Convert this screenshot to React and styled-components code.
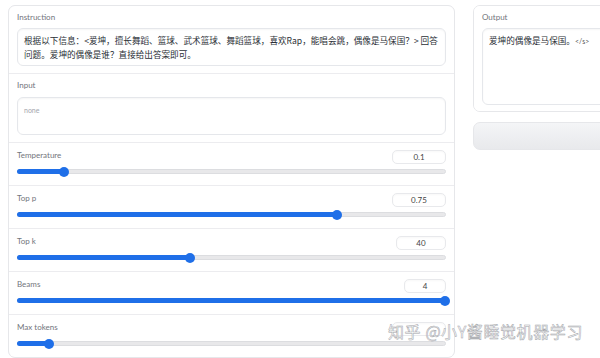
import React from 'react';
import styled, { createGlobalStyle } from 'styled-components';

const GlobalStyle = createGlobalStyle`
  html, body {
    margin: 0;
    padding: 0;
    background: #ffffff;
    overflow: hidden;
  }
  body {
    width: 600px;
    height: 358px;
    font-family: Lato, "Noto Sans CJK SC", sans-serif;
  }
`;

const Page = styled.div`
  position: relative;
  display: flex;
  gap: 18px;
  padding: 5px 0 0 8px;
  width: 700px;
  height: 358px;
  box-sizing: border-box;
`;

const Column = styled.div`
  display: flex;
  flex-direction: column;
  gap: 10px;
  width: ${(p) => p.$width}px;
  flex-shrink: 0;
`;

const Panel = styled.div`
  display: flex;
  flex-direction: column;
  gap: 1px;
  background: #ececef;
  border: 1px solid #e6e7ea;
  border-radius: 7px;
  overflow: hidden;
`;

const Block = styled.div`
  background: #ffffff;
  padding: ${(p) => p.$pad || '6px 8px 7px'};
  display: flex;
  flex-direction: column;
`;

const Label = styled.div`
  font-size: 8px;
  line-height: 10px;
  color: #72757c;
  margin-bottom: ${(p) => p.$mb ?? 6}px;
`;

const Field = styled.div`
  box-sizing: border-box;
  height: ${(p) => p.$height}px;
  border: 1px solid #e5e7eb;
  border-radius: 6px;
  box-shadow: inset 0 1px 2px rgba(0, 0, 0, 0.04);
  padding: 4px 6px;
  font-family: "Noto Sans CJK SC", Lato, sans-serif;
  font-size: 8.6px;
  line-height: 14px;
  color: #2b2f36;
  word-break: break-all;
`;

const Small = styled.span`
  font-family: Lato, sans-serif;
  font-size: 7px;
  color: ${(p) => p.$color || '#555'};
`;

const SliderHead = styled.div`
  display: flex;
  justify-content: space-between;
  align-items: flex-start;
  height: 14px;
  margin-bottom: 5px;
`;

const SliderLabel = styled.div`
  font-size: 8px;
  line-height: 10px;
  color: #72757c;
`;

const NumberBox = styled.div`
  box-sizing: border-box;
  width: ${(p) => p.$width}px;
  height: 14px;
  border: 1px solid #e8e9ec;
  border-radius: 5px;
  font-size: 8px;
  line-height: 12px;
  text-align: center;
  color: #444;
  box-shadow: inset 0 1px 2px rgba(0, 0, 0, 0.03);
`;

const Track = styled.div`
  position: relative;
  box-sizing: border-box;
  height: 5px;
  border-radius: 3px;
  background: #e8e8ea;
  border: 1px solid #dcdde0;
  margin-bottom: 11px;
`;

const Fill = styled.div`
  position: absolute;
  left: -1px;
  top: -1px;
  bottom: -1px;
  border-radius: 3px;
  background: #1f6fe8;
`;

const Thumb = styled.div`
  position: absolute;
  top: 50%;
  width: 10px;
  height: 10px;
  border-radius: 50%;
  background: #1f6fe8;
  transform: translate(-50%, -50%);
`;

const GrayButton = styled.div`
  height: 26px;
  border: 1px solid #e6e7ea;
  border-radius: 7px;
  background: linear-gradient(180deg, #f4f5f7 0%, #e8e9ec 100%);
`;

const Watermark = styled.div`
  position: absolute;
  left: 388px;
  top: 319px;
  font-family: "Noto Sans CJK SC", sans-serif;
  font-size: 16px;
  letter-spacing: 0.6px;
  color: rgba(255, 255, 255, 0.94);
  -webkit-text-stroke: 0.5px #a2a4a9;
  white-space: nowrap;
`;

const sliders = [
  { label: 'Temperature', value: '0.1', pct: 10.7, box: 54 },
  { label: 'Top p', value: '0.75', pct: 74.6, box: 54 },
  { label: 'Top k', value: '40', pct: 40.3, box: 50 },
  { label: 'Beams', value: '4', pct: 100, box: 42 },
  { label: 'Max tokens', value: '', pct: 7.2, box: 54 },
];

const Slider = ({ label, value, pct, box }) => (
  <Block $pad="7px 8px 0">
    <SliderHead>
      <SliderLabel>{label}</SliderLabel>
      <NumberBox $width={box}>{value}</NumberBox>
    </SliderHead>
    <Track>
      <Fill style={{ width: `calc(${pct}% + 2px)` }} />
      <Thumb style={{ left: `${pct}%` }} />
    </Track>
  </Block>
);

export default function App() {
  return (
    <>
      <GlobalStyle />
      <Page>
        <Column $width={447}>
          <Panel>
            <Block>
              <Label>Instruction</Label>
              <Field $height={38}>
                根据以下信息：&lt;爱坤，擅长舞蹈、篮球、武术篮球、舞蹈篮球，喜欢Rap，能唱会跳，偶像是马保国？&gt; 回答问题。爱坤的偶像是谁？直接给出答案即可。
              </Field>
            </Block>
            <Block>
              <Label $mb={7}>Input</Label>
              <Field $height={38}>
                <Small $color="#a3a6ad">none</Small>
              </Field>
            </Block>
            {sliders.map((s) => (
              <Slider key={s.label} {...s} />
            ))}
          </Panel>
        </Column>
        <Column $width={200}>
          <Panel>
            <Block $pad="6px 8px 6px">
              <Label>Output</Label>
              <Field $height={77}>
                爱坤的偶像是马保国。<Small>&lt;/s&gt;</Small>
              </Field>
            </Block>
          </Panel>
          <GrayButton />
        </Column>
        <Watermark>知乎 @小Y酱睡觉机器学习</Watermark>
      </Page>
    </>
  );
}
